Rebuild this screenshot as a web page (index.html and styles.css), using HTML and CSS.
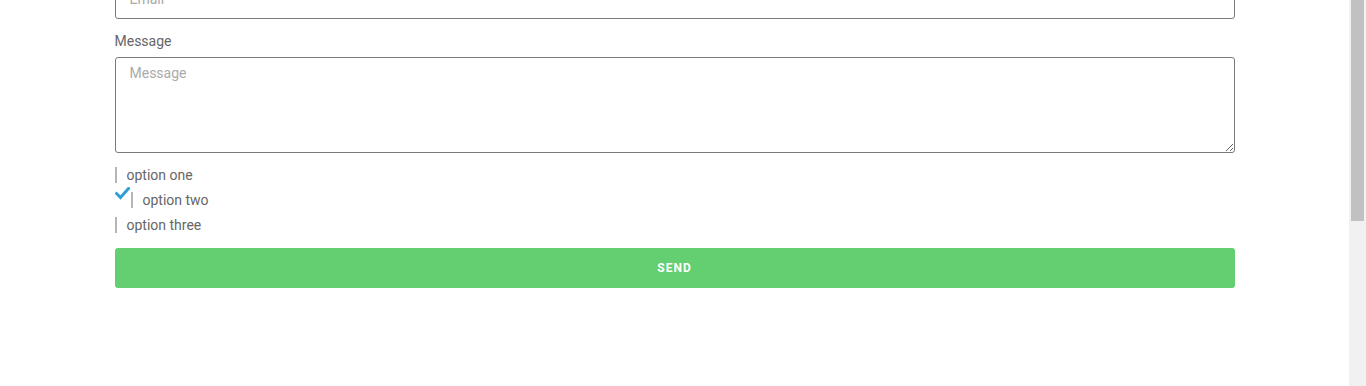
FILE: index.html
```html
<!DOCTYPE html>
<html lang="en">
<head>
<meta charset="utf-8">
<title>Contact form</title>
<link rel="stylesheet" href="styles.css">
</head>
<body>
<div class="page">
  <main class="main">
    <form class="form">
      <input class="field" type="email" placeholder="Email">
      <label class="label" for="msg">Message</label>
      <textarea id="msg" class="area" placeholder="Message"></textarea>
      <div class="options">
        <div class="opt"><span class="bar"></span><span class="opt-text">option one</span></div>
        <div class="opt checked">
          <svg class="check" width="15" height="13" viewBox="0 0 15 13"><path d="M1.5 6.5 L5.5 10.5 L13.5 1.5" fill="none" stroke="#2b9fd9" stroke-width="3" stroke-linecap="square"/></svg>
          <span class="bar"></span><span class="opt-text">option two</span>
        </div>
        <div class="opt"><span class="bar"></span><span class="opt-text">option three</span></div>
      </div>
      <button class="send" type="button">SEND</button>
    </form>
  </main>
  <div class="scrollbar"><div class="thumb"></div></div>
</div>
</body>
</html>
```
FILE: styles.css
```css
html, body {
  margin: 0;
  padding: 0;
  height: 386px;
  overflow: hidden;
  background: #fff;
}
body {
  font-family: Roboto, "Liberation Sans", Arial, sans-serif;
  font-size: 14px;
  color: #666;
}
.page {
  display: flex;
  height: 386px;
}
.main {
  flex: 1;
  overflow: hidden;
}
.form {
  width: 1120px;
  margin: -21px auto 0;
  display: flex;
  flex-direction: column;
}
.field {
  box-sizing: border-box;
  height: 40px;
  width: 100%;
  border: 1px solid #7a7a7a;
  border-radius: 3px;
  padding: 0 14px;
  font: inherit;
  color: #555;
  outline: none;
}
.field::placeholder, .area::placeholder {
  color: #aaa;
}
.label {
  margin-top: 12px;
  line-height: 20px;
  color: #666;
}
.area {
  box-sizing: border-box;
  margin-top: 6px;
  height: 96px;
  width: 100%;
  border: 1px solid #7a7a7a;
  border-radius: 3px;
  padding: 5px 14px;
  font: inherit;
  line-height: 20px;
  color: #555;
  resize: vertical;
  outline: none;
  display: block;
}
.options {
  margin-top: 9px;
  display: flex;
  flex-direction: column;
}
.opt {
  display: flex;
  align-items: center;
  height: 25px;
}
.bar {
  width: 2px;
  height: 16px;
  background: #b5b5b5;
  margin-right: 10px;
}
.checked .bar {
  margin-left: 1px;
}
.check {
  align-self: flex-start;
  display: block;
}
.opt-text {
  line-height: 20px;
  color: #666;
}
.send {
  margin-top: 11px;
  height: 40px;
  width: 100%;
  border: none;
  border-radius: 3px;
  background: #63cf70;
  color: #fff;
  font-family: Roboto, "Liberation Sans", Arial, sans-serif;
  font-size: 12px;
  font-weight: 700;
  letter-spacing: 1px;
  cursor: pointer;
}
.scrollbar {
  width: 17px;
  background: #f1f1f1;
  flex: none;
  display: flex;
  justify-content: center;
}
.thumb {
  width: 13px;
  height: 221px;
  background: #c1c1c1;
}
```
